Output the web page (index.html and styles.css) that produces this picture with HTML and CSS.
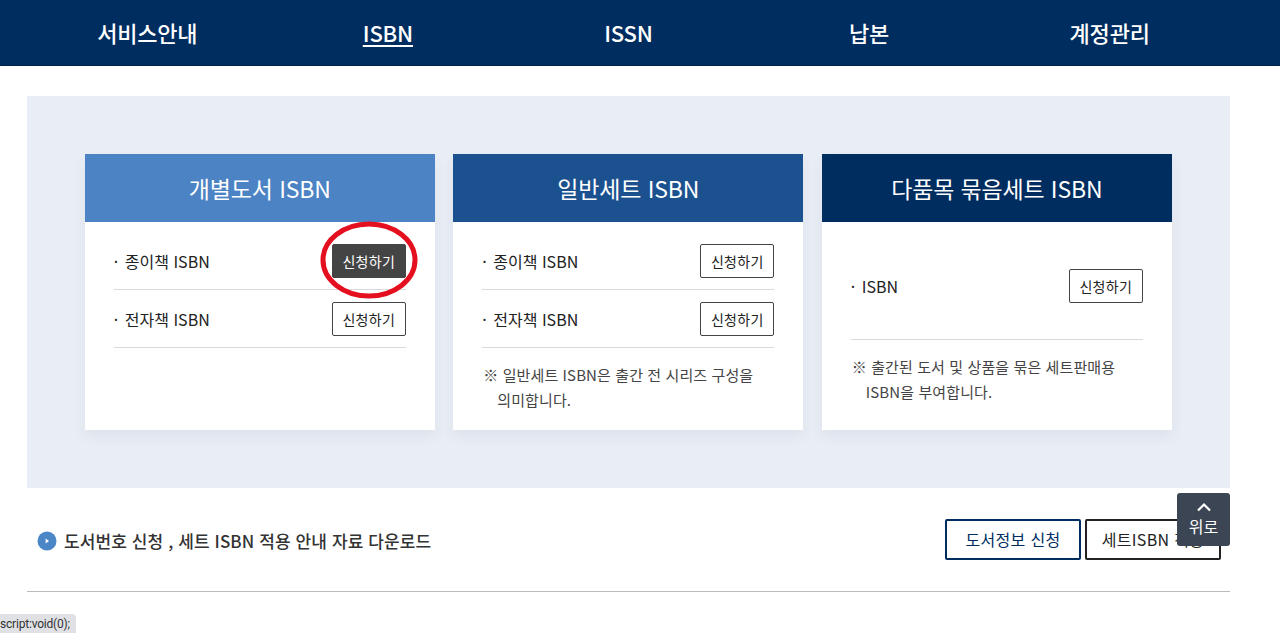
FILE: index.html
```html
<!DOCTYPE html>
<html lang="ko">
<head>
<meta charset="utf-8">
<title>ISBN</title>
<link rel="stylesheet" href="styles.css">
</head>
<body>
<nav class="nav">
  <a class="nav-item">서비스안내</a>
  <a class="nav-item active">ISBN</a>
  <a class="nav-item">ISSN</a>
  <a class="nav-item">납본</a>
  <a class="nav-item">계정관리</a>
</nav>
<main class="main">
  <section class="panel">
    <article class="card">
      <h2 class="card-head head-light">개별도서 ISBN</h2>
      <div class="card-body">
        <div class="row"><span class="label"><b class="dot">·</b>종이책 ISBN</span><a class="apply dark">신청하기</a></div>
        <div class="row"><span class="label"><b class="dot">·</b>전자책 ISBN</span><a class="apply">신청하기</a></div>
      </div>
    </article>
    <article class="card">
      <h2 class="card-head head-mid">일반세트 ISBN</h2>
      <div class="card-body">
        <div class="row"><span class="label"><b class="dot">·</b>종이책 ISBN</span><a class="apply">신청하기</a></div>
        <div class="row"><span class="label"><b class="dot">·</b>전자책 ISBN</span><a class="apply">신청하기</a></div>
        <p class="note">※ 일반세트 ISBN은 출간 전 시리즈 구성을<br><span class="indent">의미합니다.</span></p>
      </div>
    </article>
    <article class="card">
      <h2 class="card-head head-deep">다품목 묶음세트 ISBN</h2>
      <div class="card-body">
        <div class="row row-tall"><span class="label"><b class="dot">·</b>ISBN</span><a class="apply">신청하기</a></div>
        <p class="note">※ 출간된 도서 및 상품을 묶은 세트판매용<br><span class="indent">ISBN을 부여합니다.</span></p>
      </div>
    </article>
  </section>
  <section class="foot">
    <a class="download">
      <svg class="play" viewBox="0 0 20 20" aria-hidden="true"><circle cx="10" cy="10" r="9.5" fill="#4b86c6"/><path d="M8.6 7.4 12 10l-3.4 2.6z" fill="#fff"/></svg>
      <span>도서번호 신청 , 세트 ISBN 적용 안내 자료 다운로드</span>
    </a>
    <div class="foot-btns">
      <a class="wide navy">도서정보 신청</a>
      <a class="wide black">세트ISBN 적용</a>
    </div>
  </section>
</main>
<svg class="circle" viewBox="0 0 98 78" aria-hidden="true"><ellipse cx="49" cy="39" rx="46" ry="36" fill="none" stroke="#e4101f" stroke-width="5"/></svg>
<a class="top">
  <svg class="chev" viewBox="0 0 16 10" aria-hidden="true"><path d="M2 8.5 8 2.5l6 6" fill="none" stroke="#fff" stroke-width="2.2"/></svg>
  <span>위로</span>
</a>
<div class="status">script:void(0);</div>
</body>
</html>
```
FILE: styles.css
```css
* { box-sizing: border-box; }
html, body { margin: 0; height: 633px; overflow: hidden; }
body {
  position: relative;
  background: #fff;
  font-family: "Noto Sans CJK KR", "Noto Sans", sans-serif;
  color: #222;
}
h2, p { margin: 0; }
.nav {
  display: flex;
  height: 66px;
  padding: 0 50px 0 27px;
  background: #002d5f;
  border-bottom: 1px solid #00204a;
}
.nav-item {
  flex: 1;
  text-align: center;
  line-height: 65px;
  font-size: 22px;
  font-weight: 500;
  letter-spacing: -0.2px;
  color: #fff;
}
.nav-item.active { text-decoration: underline; text-underline-offset: 3px; text-decoration-thickness: 2px; }
.main { padding: 30px 50px 0 27px; }
.panel {
  display: flex;
  gap: 18.5px;
  height: 392px;
  padding: 58px 58px 58px 57.8px;
  background: #e9edf5;
}
.card {
  width: 350px;
  height: 276px;
  flex: none;
  background: #fff;
  box-shadow: 0 6px 12px rgba(60, 80, 120, 0.07);
}
.card-head {
  height: 68px;
  text-align: center;
  line-height: 69px;
  font-size: 23px;
  font-weight: 400;
  letter-spacing: -0.15px;
  color: #fff;
}
.head-light { background: #4b83c4; }
.head-mid { background: #1c5190; }
.head-deep { background: #002d5f; }
.card-body { padding: 10px 29px 0; }
.row {
  display: flex;
  justify-content: space-between;
  align-items: center;
  height: 58px;
  border-bottom: 1px solid #d9d9d9;
}
.row-tall { height: 108px; }
.label { padding-top: 1px; font-size: 16px; color: #222; }
.dot { display: inline-block; width: 11px; font-weight: 400; }
.apply {
  display: block;
  width: 74px;
  height: 34px;
  border: 1px solid #444;
  border-radius: 2px;
  text-align: center;
  line-height: 32px;
  font-size: 14px;
  letter-spacing: 0.3px;
  color: #222;
  background: #fff;
}
.apply.dark { background: #444; color: #fff; }
.note {
  margin-top: 14px;
  padding-left: 1px;
  font-size: 15px;
  line-height: 25px;
  letter-spacing: 0.1px;
  color: #444;
}
.indent { padding-left: 14px; }
.foot {
  display: flex;
  justify-content: space-between;
  align-items: center;
  height: 104px;
  padding: 2px 9px 0 10px;
  border-bottom: 1px solid #bbb;
}
.download {
  display: flex;
  align-items: center;
  gap: 7px;
  font-size: 17px;
  font-weight: 500;
  letter-spacing: 0.1px;
  color: #333;
}
.play { width: 20px; height: 20px; }
.foot-btns { display: flex; gap: 4px; margin-top: -2px; }
.wide {
  display: block;
  width: 136px;
  height: 41px;
  border: 2px solid;
  border-radius: 2px;
  text-align: center;
  line-height: 37px;
  font-size: 16px;
  letter-spacing: 0.3px;
  background: #fff;
}
.navy { border-color: #002d5f; color: #002d5f; }
.black { border-color: #222; color: #222; }
.circle {
  position: absolute;
  left: 320px;
  top: 221px;
  width: 98px;
  height: 78px;
}
.top {
  position: absolute;
  left: 1177px;
  top: 493px;
  width: 53px;
  height: 53px;
  display: flex;
  flex-direction: column;
  align-items: center;
  padding-top: 9px;
  border-radius: 3px;
  background: #3c4553;
  color: #fff;
  font-size: 16px;
  line-height: 21px;
}
.chev { width: 16px; height: 10px; margin-bottom: 4px; }
.status {
  position: absolute;
  left: 0;
  top: 614px;
  width: 76px;
  height: 19px;
  white-space: nowrap;
  border-top-right-radius: 4px;
  background: #dfe1e5;
  color: #333;
  font-family: "Roboto", sans-serif;
  font-size: 12px;
  letter-spacing: -0.2px;
  line-height: 20px;
}
```
